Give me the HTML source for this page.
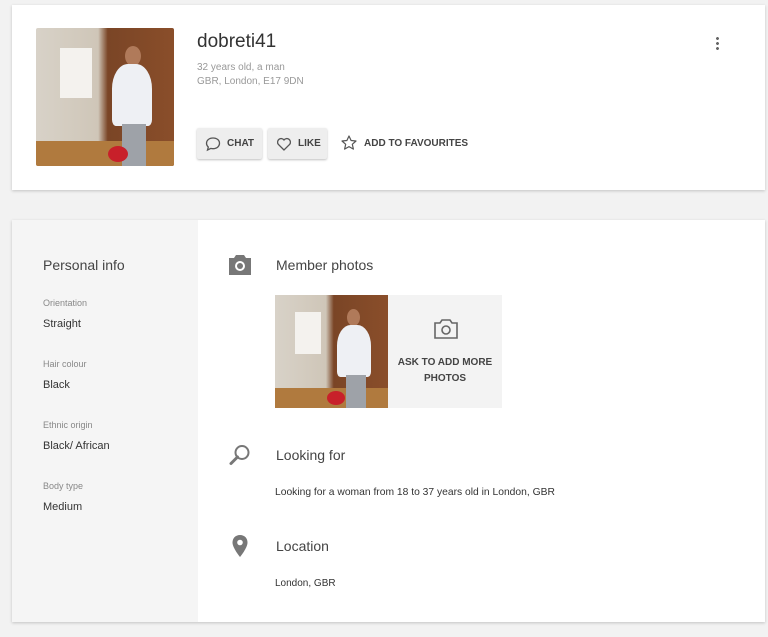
<!DOCTYPE html>
<html><head><meta charset="utf-8"><style>
*{margin:0;padding:0;box-sizing:border-box}
body{width:768px;height:637px;background:#f2f2f2;font-family:"Liberation Sans",sans-serif;position:relative;overflow:hidden;color:#333}
.card{position:absolute;background:#fff;box-shadow:0 1px 3px rgba(0,0,0,.2)}
.abs{position:absolute}
.photo{position:absolute;overflow:hidden;background:linear-gradient(90deg,#d8d2c8 0%,#cfc6b8 45%,#7a4526 52%,#8a4e2a 100%)}
.photo .floor{position:absolute;left:0;right:0;bottom:0;height:18%;background:#b07a3e}
.photo .win{position:absolute;background:#f4f2ee}
.photo .man{position:absolute;background:#eef0f4;border-radius:40% 40% 10% 10%}
.photo .head{position:absolute;background:#b07a5a;border-radius:50%}
.photo .legs{position:absolute;background:#9ea2a8}
.photo .fl{position:absolute;background:#c8202a;border-radius:50%}
.btn{position:absolute;height:31px;background:#eee;box-shadow:0 1px 2px rgba(0,0,0,.25);border-radius:2px;font-size:10px;font-weight:bold;color:#444;display:flex;align-items:center}
.lbl{position:absolute;left:43px;font-size:9px;color:#888}
.val{position:absolute;left:43px;font-size:11px;color:#333}
.h{position:absolute;left:276px;font-size:14px;color:#444}
</style></head><body>
<div class="card" style="left:12px;top:5px;width:753px;height:185px"></div>
<div class="photo" style="left:36px;top:28px;width:138px;height:138px;border-radius:2px">
 <div class="win" style="left:24px;top:20px;width:32px;height:50px"></div>
 <div class="floor"></div>
 <div class="head" style="left:89px;top:18px;width:16px;height:20px"></div>
 <div class="man" style="left:76px;top:36px;width:40px;height:62px"></div>
 <div class="legs" style="left:86px;top:96px;width:24px;height:42px"></div>
 <div class="fl" style="left:72px;top:118px;width:20px;height:16px"></div>
</div>
<div class="abs" style="left:197px;top:31px;font-size:19px;color:#333">dobreti41</div>
<div class="abs" style="left:197px;top:61px;font-size:10px;color:#999;line-height:14px">32 years old, a man<br>GBR, London, E17 9DN</div>
<div class="abs" style="left:716px;top:36px;width:3px;height:15px;background:radial-gradient(circle,#666 1.3px,transparent 1.6px) 0 0/3px 5px"></div>
<div class="btn" style="left:197px;top:128px;width:65px"><svg width="18" height="18" viewBox="0 0 18 18" style="margin:0 5px 0 7px"><path d="M9 3C5 3 2.5 5.4 2.5 8.3c0 1.5.7 2.8 1.8 3.8L3.5 15l3.3-1.6c.7.2 1.4.3 2.2.3 4 0 6.5-2.4 6.5-5.4S13 3 9 3z" fill="none" stroke="#555" stroke-width="1.3"/></svg>CHAT</div>
<div class="btn" style="left:268px;top:128px;width:59px"><svg width="18" height="18" viewBox="0 0 18 18" style="margin:0 5px 0 7px"><path d="M9 15L3.3 9.3A3.3 3.3 0 0 1 9 5a3.3 3.3 0 0 1 5.7 4.3z" fill="none" stroke="#555" stroke-width="1.3"/></svg>LIKE</div>
<div class="abs" style="left:340px;top:134px;display:flex;align-items:center;font-size:10px;font-weight:bold;color:#444"><svg width="18" height="18" viewBox="0 0 18 18" style="margin-right:6px"><path d="M9 2l2.1 4.5 4.9.5-3.7 3.3 1.1 4.8L9 12.6 4.6 15.1l1.1-4.8L2 7l4.9-.5z" fill="none" stroke="#555" stroke-width="1.2" stroke-linejoin="round"/></svg>ADD TO FAVOURITES</div>

<div class="card" style="left:12px;top:220px;width:753px;height:402px"></div>
<div class="abs" style="left:12px;top:220px;width:186px;height:402px;background:#f5f5f5"></div>
<div class="abs" style="left:43px;top:257px;font-size:14px;color:#444">Personal info</div>
<div class="lbl" style="top:298px">Orientation</div><div class="val" style="top:318px">Straight</div>
<div class="lbl" style="top:359px">Hair colour</div><div class="val" style="top:379px">Black</div>
<div class="lbl" style="top:420px">Ethnic origin</div><div class="val" style="top:440px">Black/ African</div>
<div class="lbl" style="top:481px">Body type</div><div class="val" style="top:501px">Medium</div>

<svg class="abs" style="left:227px;top:253px" width="26" height="24" viewBox="0 0 26 24"><path d="M2 5h5l2-3h8l2 3h5v17H2z" fill="#777"/><circle cx="13" cy="13" r="5" fill="#fff"/><circle cx="13" cy="13" r="3" fill="#777"/></svg>
<div class="h" style="top:257px">Member photos</div>
<div class="photo" style="left:275px;top:295px;width:113px;height:113px">
 <div class="win" style="left:20px;top:17px;width:26px;height:42px"></div>
 <div class="floor"></div>
 <div class="head" style="left:72px;top:14px;width:13px;height:17px"></div>
 <div class="man" style="left:62px;top:30px;width:34px;height:52px"></div>
 <div class="legs" style="left:71px;top:80px;width:20px;height:33px"></div>
 <div class="fl" style="left:52px;top:96px;width:18px;height:14px"></div>
</div>
<div class="abs" style="left:388px;top:295px;width:114px;height:113px;background:#f3f3f3"></div>
<svg class="abs" style="left:433px;top:318px" width="26" height="22" viewBox="0 0 26 22"><path d="M2 5h5l2-3h8l2 3h5v15H2z" fill="none" stroke="#666" stroke-width="1.6"/><circle cx="13" cy="12" r="4" fill="none" stroke="#666" stroke-width="1.6"/></svg>
<div class="abs" style="left:388px;top:355px;width:114px;text-align:center;font-size:10px;font-weight:bold;color:#444;line-height:16px">ASK TO ADD MORE<br>PHOTOS</div>

<svg class="abs" style="left:228px;top:443px" width="24" height="24" viewBox="0 0 24 24"><circle cx="14" cy="9.5" r="6.5" fill="none" stroke="#777" stroke-width="2"/><path d="M9.5 14L3 20.5" stroke="#777" stroke-width="3" stroke-linecap="round"/></svg>
<div class="h" style="top:447px">Looking for</div>
<div class="abs" style="left:275px;top:487px;font-size:10.3px;color:#333">Looking for a woman from 18 to 37 years old in London, GBR</div>

<svg class="abs" style="left:230px;top:534px" width="20" height="24" viewBox="0 0 20 24"><path d="M10 1C5.5 1 2.5 4.3 2.5 8.5 2.5 14 10 23 10 23s7.5-9 7.5-14.5C17.5 4.3 14.5 1 10 1z" fill="#777"/><circle cx="10" cy="8.5" r="2.8" fill="#fff"/></svg>
<div class="h" style="top:538px">Location</div>
<div class="abs" style="left:275px;top:578px;font-size:10px;color:#333">London, GBR</div>
</body></html>
